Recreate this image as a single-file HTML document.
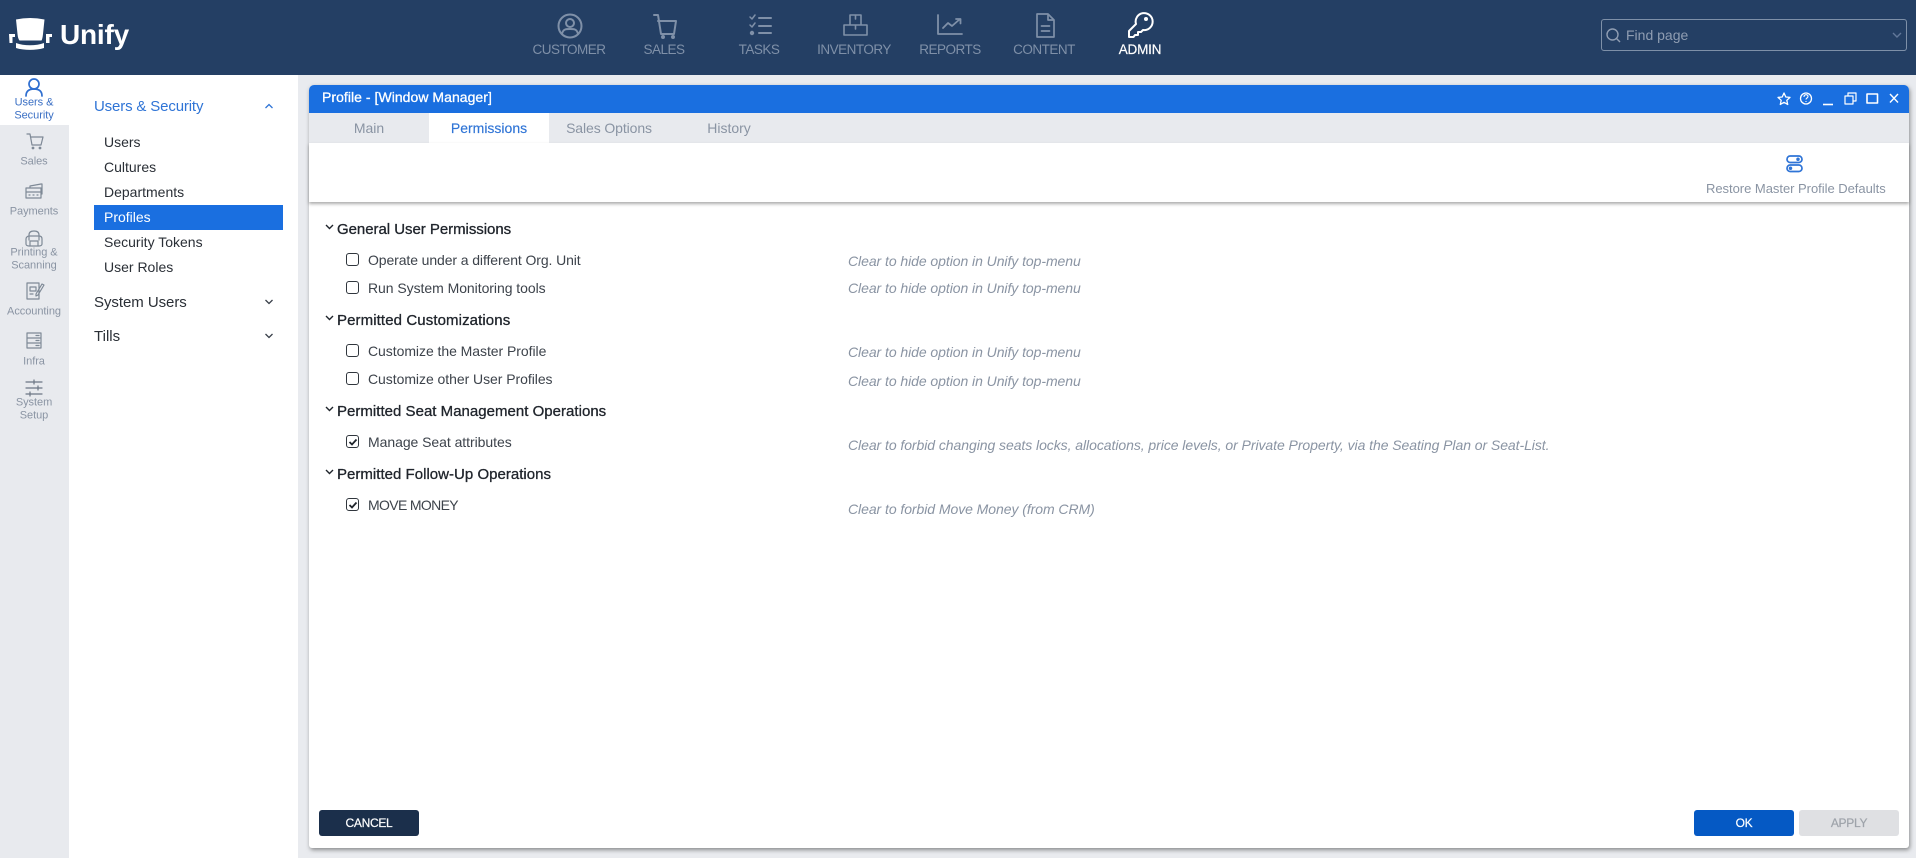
<!DOCTYPE html>
<html><head><meta charset="utf-8"><title>Unify</title>
<style>
html,body{margin:0;padding:0}
body{width:1916px;height:858px;overflow:hidden;background:#e9ebef;font-family:"Liberation Sans",sans-serif;position:relative}
.a{position:absolute;white-space:nowrap}
.t{position:absolute;white-space:nowrap;transform:translateY(-50%);line-height:18px}
svg{position:absolute;overflow:visible;fill:none}
.n{font-size:13.5px;color:#7f90a8;transform:translate(-50%,-50%);letter-spacing:-.5px}
.r{font-size:11px;color:#8a94a3;transform:translate(-50%,-50%);line-height:13px;letter-spacing:-.05px}
.s{font-size:14px;color:#2a2f36}
.h{font-size:15px;color:#20252c;-webkit-text-stroke:.3px #20252c;left:337px;letter-spacing:.02px}
.l{font-size:14px;color:#3d434b;left:368px;letter-spacing:-.05px}
.i{font-size:14px;color:#8a94a3;left:848px;font-style:italic;letter-spacing:-.06px}
.c{position:absolute;left:346px;width:11px;height:11px;border:1.5px solid #30363d;border-radius:3px;background:#fff}
.b{position:absolute;top:810px;height:26px;width:100px;border-radius:3px;text-align:center;font-size:12px;line-height:26px;-webkit-text-stroke:.2px;letter-spacing:-.3px}
</style></head><body>
<div class="a" style="left:0;top:0;width:1916px;height:75px;background:#243f64"></div>

<!-- logo -->
<svg style="left:0;top:10px" width="60" height="50">
<path d="M16 9.500Q30 6.500 44.500 9.500L43 24Q42.500 29 41.500 30.500H19.500Q18 29 17.500 24z" fill="#fff"/>
<path d="M9 24h6v3h-2.500v6H9.500zM46 24h6v3h-2.500v6H46z" fill="#fff"/>
<path d="M16 33c8 3 20 3 28 0v5c-8 2.500-20 2.500-28 0z" fill="#fff"/>
</svg>
<div class="t" style="left:60px;top:35px;font-size:28px;font-weight:bold;color:#fff;line-height:34px;letter-spacing:-.2px">Unify</div>

<!-- top nav -->
<svg style="left:0;top:0" width="1300" height="60" stroke="#7f90a8" stroke-width="2" stroke-linecap="round" stroke-linejoin="round">
<circle cx="570" cy="26" r="11.5"/><circle cx="570" cy="23" r="4"/><path d="M562 34c1-5 4-5 8-5s7 0 8 5"/>
<path d="M654 15h4l3 19h13l2-13h-18"/><circle cx="663" cy="37" r="1" fill="#7f90a8"/><circle cx="673" cy="37" r="1" fill="#7f90a8"/>
<path d="M750 17l2 2 3-4M750 25l2 2 3-4" stroke-width="1.5"/><circle cx="752" cy="33" r="1.2" fill="#7f90a8"/><path d="M759 18h12M759 26h12M759 33h12"/>
<path d="M844 25h23v10h-23zM855.500 25v4M850 15h11v10h-11zM855.500 15v4" stroke-width="1.600"/>
<path d="M938 15v19h24M943 28l5-5 4 3 8-7M956 19h4.500v4.500" stroke-width="1.800"/>
<path d="M1037 14h11l6 6v17h-17zM1048 14v6h6M1041.500 26h8M1041.500 31h8" stroke-width="1.700"/>
<path d="M1136 24a8.500 8.500 0 1 1 7 6l-2 2h-3v3h-3l-1.500 2H1129v-6z" stroke="#fff"/><circle cx="1146" cy="19" r="1" stroke="#fff"/>
</svg>
<div class="t n" style="left:569px;top:49.500px">CUSTOMER</div>
<div class="t n" style="left:664px;top:49.500px">SALES</div>
<div class="t n" style="left:759px;top:49.500px">TASKS</div>
<div class="t n" style="left:854px;top:49.500px">INVENTORY</div>
<div class="t n" style="left:950px;top:49.500px">REPORTS</div>
<div class="t n" style="left:1044px;top:49.500px">CONTENT</div>
<div class="t n" style="left:1140px;top:49.500px;color:#fff;-webkit-text-stroke:.2px #fff;letter-spacing:-.2px">ADMIN</div>

<!-- search -->
<div class="a" style="left:1601px;top:19px;width:304px;height:30px;border:1px solid #7e90a8;border-radius:3px"></div>
<svg style="left:1600px;top:20px" width="310" height="30" stroke="#8f9db2" stroke-width="1.400"><circle cx="12.500" cy="14.500" r="5.500"/><path d="M16.500 18.500l3.500 3.500"/><path d="M293 13l4 4 4-4" stroke="#62789a"/></svg>
<div class="t" style="left:1626px;top:35px;font-size:14px;color:#8f9db2">Find page</div>

<!-- rail -->
<div class="a" style="left:0;top:75px;width:69px;height:783px;background:#e8eaee"></div>
<div class="a" style="left:0;top:75px;width:69px;height:50px;background:#fff"></div>
<div class="a" style="left:69px;top:75px;width:229px;height:783px;background:#fff"></div>
<svg style="left:0;top:75px" width="69" height="360" stroke="#7e8996" stroke-width="1.200" stroke-linejoin="round" stroke-linecap="round">
<circle cx="34" cy="9" r="5" stroke="#2f6fd0" stroke-width="1.700"/><path d="M26 21c0-5 3-7 8-7s8 2 8 7" stroke="#2f6fd0" stroke-width="1.700"/>
<path d="M27 59h3l2 11h9l2-8H31"/><circle cx="33" cy="73" r=".8" fill="#7e8996"/><circle cx="40" cy="73" r=".8" fill="#7e8996"/>
<path d="M26 113h15v10H26zM26 117h15M30 113v-2l11-2h1v10M29 120h1M33 120h1M37 120h1"/>
<g transform="translate(0 2)"><path d="M29 163v-5c0-3 2-4 5-4s5 1 5 4v5M26 167v-5c0-2 2-3 3-3h10c2 0 3 1 3 3v5c0 1-1 2-3 2h-10c-2 0-3-1-3-2zM30 164h8v5h-8z"/></g>
<path d="M27 208h12v16H27zM30 212h6v4h-6zM30 219h3M36 219l6-10 2 1-6 10-2 1z"/>
<path d="M27 258h14v5H27zM27 263h14v5H27zM27 268h14v5H27zM36 260.500h3M36 265.500h3M36 270.500h3"/>
<path d="M26 307h16M26 313h16M26 319h16" stroke="#6c7684"/><path d="M34 305v4M38 311v4M30 317v4" stroke="#6c7684"/>
</svg>
<div class="t r" style="left:34px;top:103px;color:#3a6fc4">Users &amp;</div>
<div class="t r" style="left:34px;top:116px;color:#3a6fc4">Security</div>
<div class="t r" style="left:34px;top:162px">Sales</div>
<div class="t r" style="left:34px;top:212px">Payments</div>
<div class="t r" style="left:34px;top:253px">Printing &amp;</div>
<div class="t r" style="left:34px;top:266px">Scanning</div>
<div class="t r" style="left:34px;top:312px">Accounting</div>
<div class="t r" style="left:34px;top:362px">Infra</div>
<div class="t r" style="left:34px;top:403px">System</div>
<div class="t r" style="left:34px;top:416px">Setup</div>

<!-- sub nav -->
<div class="t" style="left:94px;top:107px;font-size:15px;color:#2f74d6;letter-spacing:-.15px">Users &amp; Security</div>
<svg style="left:260px;top:100px" width="20" height="250" stroke-width="1.300"><path d="M5.500 8l3.500-3.500L12.500 8" stroke="#2f74d6"/><path d="M5.500 200l3.500 3.500 3.500-3.500M5.500 234l3.500 3.500 3.500-3.500" stroke="#39404a"/></svg>
<div class="t s" style="left:104px;top:142px">Users</div>
<div class="t s" style="left:104px;top:167px">Cultures</div>
<div class="t s" style="left:104px;top:192px">Departments</div>
<div class="a" style="left:94px;top:205px;width:189px;height:25px;background:#1a6fe0"></div>
<div class="t s" style="left:104px;top:217px;color:#fff">Profiles</div>
<div class="t s" style="left:104px;top:242px">Security Tokens</div>
<div class="t s" style="left:104px;top:267px">User Roles</div>
<div class="t" style="left:94px;top:303px;font-size:15px;color:#2a2f36;letter-spacing:-.05px">System Users</div>
<div class="t" style="left:94px;top:337px;font-size:15px;color:#2a2f36">Tills</div>

<!-- window -->
<div class="a" style="left:309px;top:85px;width:1600px;height:763px;background:#fff;border-radius:5px 5px 3px 3px;box-shadow:1px 2px 4px rgba(60,60,60,.55)"></div>
<div class="a" style="left:309px;top:85px;width:1600px;height:28px;background:#1a6fe0;border-radius:5px 5px 0 0"></div>
<div class="t" style="left:322px;top:97px;font-size:14px;color:#fff;-webkit-text-stroke:.3px #fff;letter-spacing:.04px">Profile - [Window Manager]</div>
<svg style="left:1770px;top:85px" width="140" height="30" stroke="#fff" stroke-width="1.300" stroke-linejoin="round">
<path d="M14 8l1.800 4 4.200.4-3.200 2.900.9 4.200-3.700-2.200-3.700 2.200.9-4.200-3.200-2.900 4.200-.4z"/>
<circle cx="36" cy="13.500" r="5.500"/><path d="M34 12c0-3 4-3 4-.5 0 1.500-2 1.500-2 3M36 16v1" stroke-width="1.100"/>
<path d="M53 19.500h10" stroke-width="1.600"/>
<path d="M75 11h8v8h-8zM78 11V8h8v8h-3" stroke-width="1.200"/>
<path d="M97 9h10.500v9H97z" stroke-width="1.600"/>
<path d="M120 9l8 8.500M128 9l-8 8.500" stroke-width="1.400"/>
</svg>

<div class="a" style="left:309px;top:113px;width:1600px;height:30px;background:#e8eaee"></div>
<div class="a" style="left:429px;top:113px;width:120px;height:30px;background:#fff"></div>
<div class="t" style="left:369px;top:128px;font-size:14px;color:#8a94a3;transform:translate(-50%,-50%)">Main</div>
<div class="t" style="left:489px;top:128px;font-size:14px;color:#2f74d6;transform:translate(-50%,-50%);-webkit-text-stroke:.15px #2f74d6">Permissions</div>
<div class="t" style="left:609px;top:128px;font-size:14px;color:#8a94a3;transform:translate(-50%,-50%);letter-spacing:-.1px">Sales Options</div>
<div class="t" style="left:729px;top:128px;font-size:14px;color:#8a94a3;transform:translate(-50%,-50%)">History</div>

<div class="a" style="left:309px;top:143px;width:1600px;height:59px;background:#fff;box-shadow:0 2px 3px rgba(70,70,70,.45)"></div>
<svg style="left:1785px;top:154px" width="20" height="20" stroke="#2f74d6" stroke-width="1.700"><rect x="2" y="2" width="15" height="6.500" rx="3.200"/><rect x="2" y="11" width="15" height="6.500" rx="3.200"/><circle cx="13" cy="5.200" r=".9" fill="#2f74d6"/><circle cx="5.500" cy="14.200" r=".9" fill="#2f74d6"/></svg>
<div class="t" style="left:1706px;top:189px;font-size:13px;color:#8a94a3;letter-spacing:-.03px">Restore Master Profile Defaults</div>

<!-- content -->
<svg style="left:325px;top:220px" width="14" height="270" stroke="#20252c" stroke-width="1.400"><path d="M1 5l3.500 3.500L8 5M1 96l3.500 3.500L8 96M1 187l3.500 3.500L8 187M1 250l3.500 3.500L8 250"/></svg>
<div class="t h" style="top:229.500px;letter-spacing:-.04px">General User Permissions</div>
<div class="t h" style="top:320.500px;letter-spacing:.1px">Permitted Customizations</div>
<div class="t h" style="top:411.500px">Permitted Seat Management Operations</div>
<div class="t h" style="top:474.500px">Permitted Follow-Up Operations</div>

<div class="c" style="top:253px"></div><div class="t l" style="top:260px;letter-spacing:-.1px">Operate under a different Org. Unit</div>
<div class="c" style="top:281px"></div><div class="t l" style="top:288px">Run System Monitoring tools</div>
<div class="c" style="top:344px"></div><div class="t l" style="top:351px">Customize the Master Profile</div>
<div class="c" style="top:372px"></div><div class="t l" style="top:379px">Customize other User Profiles</div>
<div class="c" style="top:435px"></div><div class="t l" style="top:442px">Manage Seat attributes</div>
<div class="c" style="top:498px"></div><div class="t l" style="top:505px;letter-spacing:-.65px">MOVE MONEY</div>
<svg style="left:346px;top:435px" width="14" height="80" stroke="#20252c" stroke-width="1.800"><path d="M3.500 7l2.500 2.500L10.500 4.500M3.500 70l2.500 2.500L10.500 67.500"/></svg>

<div class="t i" style="top:260.500px">Clear to hide option in Unify top-menu</div>
<div class="t i" style="top:288px">Clear to hide option in Unify top-menu</div>
<div class="t i" style="top:352px">Clear to hide option in Unify top-menu</div>
<div class="t i" style="top:380.500px">Clear to hide option in Unify top-menu</div>
<div class="t i" style="top:444.500px">Clear to forbid changing seats locks, allocations, price levels, or Private Property, via the Seating Plan or Seat-List.</div>
<div class="t i" style="top:508.500px">Clear to forbid Move Money (from CRM)</div>

<div class="b" style="left:319px;background:#1b2f4b;color:#fff">CANCEL</div>
<div class="b" style="left:1694px;background:#0559c4;color:#fff">OK</div>
<div class="b" style="left:1799px;background:#dfe0e3;color:#9ea3aa">APPLY</div>
</body></html>
